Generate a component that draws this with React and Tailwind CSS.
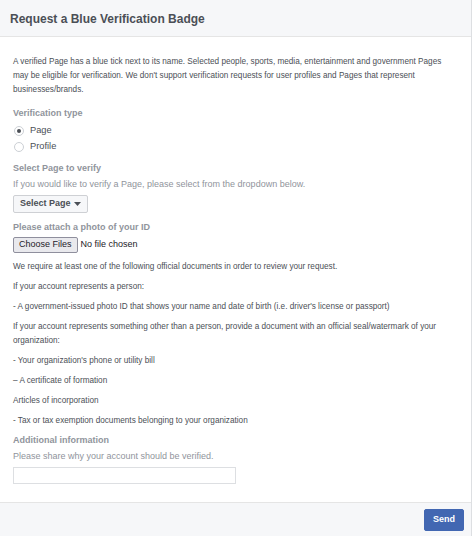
import React, { useState } from 'react';

const font = { fontFamily: '"Liberation Sans", Arial, sans-serif' };

const Para = ({ children }) => (
  <p className="text-[8.2px] leading-[14px] text-[#4b4f56] mb-[6px]">{children}</p>
);

export default function App() {
  const [type, setType] = useState('page');

  return (
    <div className="w-[474px] h-[536px] bg-white" style={font}>
      <div className="w-[472px] h-full border-r border-[#dddfe2] flex flex-col">
        {/* Header */}
        <div className="h-[37px] shrink-0 bg-[#f6f7f9] border-b border-[#e5e5e5] flex items-center px-[10px]">
          <h1 className="text-[12px] font-bold text-[#4b4f56] pt-[1px]">Request a Blue Verification Badge</h1>
        </div>

        {/* Body */}
        <div className="flex-1 px-[13px] pt-[18px]">
          <p className="text-[8.2px] leading-[14px] text-[#4b4f56]">
            A verified Page has a blue tick next to its name. Selected people, sports, media, entertainment and government Pages
            may be eligible for verification. We don't support verification requests for user profiles and Pages that represent
            businesses/brands.
          </p>

          <div className="mt-[10px] text-[9px] font-bold text-[#90949c]">Verification type</div>
          <div className="mt-[4px] flex flex-col gap-[3px] pl-[1px]">
            {[
              ['page', 'Page'],
              ['profile', 'Profile'],
            ].map(([v, label]) => (
              <label key={v} className="flex items-center gap-[6px] h-[13px] cursor-pointer" onClick={() => setType(v)}>
                <span className="w-[10px] h-[10px] rounded-full border border-[#ccd0d5] bg-white flex items-center justify-center">
                  {type === v && <span className="w-[4px] h-[4px] rounded-full bg-[#4b4f56]" />}
                </span>
                <span className="text-[9.3px] text-[#4b4f56]">{label}</span>
              </label>
            ))}
          </div>

          <div className="mt-[8px] text-[9px] font-bold text-[#90949c]">Select Page to verify</div>
          <div className="mt-[3px] text-[9px] text-[#90949c]">If you would like to verify a Page, please select from the dropdown below.</div>

          <button className="mt-[3px] h-[18px] px-[6px] flex items-center gap-[3px] bg-[#f6f7f9] border border-[#ced0d4] rounded-[2px] text-[9px] font-bold text-[#4b4f56]">
            Select Page
            <svg width="7" height="4" viewBox="0 0 7 4"><path d="M0 0h7L3.5 4z" fill="#4b4f56" /></svg>
          </button>

          <div className="mt-[8px] text-[9px] font-bold text-[#90949c]">Please attach a photo of your ID</div>
          <div className="mt-[3px] flex items-center gap-[3px]">
            <button className="h-[16px] px-[5px] bg-[#e9e9ed] border border-[#8f8f9d] rounded-[2px] text-[9px] text-[#1d2129]">
              Choose Files
            </button>
            <span className="text-[9px] text-[#1d2129]">No file chosen</span>
          </div>

          <div className="mt-[7px]">
            <Para>We require at least one of the following official documents in order to review your request.</Para>
            <Para>If your account represents a person:</Para>
            <Para>- A government-issued photo ID that shows your name and date of birth (i.e. driver's license or passport)</Para>
            <Para>
              If your account represents something other than a person, provide a document with an official seal/watermark of your
              organization:
            </Para>
            <Para>- Your organization's phone or utility bill</Para>
            <Para>– A certificate of formation</Para>
            <Para>Articles of incorporation</Para>
            <Para>- Tax or tax exemption documents belonging to your organization</Para>
          </div>

          <div className="mt-[3px] text-[9px] font-bold text-[#90949c]">Additional information</div>
          <div className="mt-[2px] text-[9px] text-[#90949c]">Please share why your account should be verified.</div>
          <input className="mt-[4px] block w-[223px] h-[17px] border border-[#dddfe2] outline-none px-[3px] text-[9px]" />
        </div>

        {/* Footer */}
        <div className="h-[34px] shrink-0 bg-[#f6f7f9] border-t border-[#e5e5e5] flex items-center justify-end px-[7px]">
          <button className="h-[22px] px-[8px] bg-[#4267b2] border border-[#4267b2] rounded-[2px] text-[9px] font-bold text-white">
            Send
          </button>
        </div>
      </div>
    </div>
  );
}
